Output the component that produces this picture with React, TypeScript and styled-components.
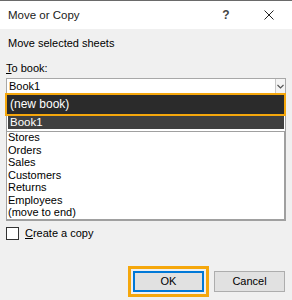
import React from 'react'
import styled, { createGlobalStyle } from 'styled-components'

const GlobalStyle = createGlobalStyle`
  html, body {
    margin: 0;
    padding: 0;
    background: #f0f0f0;
  }
  body {
    font-family: 'Liberation Sans', Arial, sans-serif;
    font-size: 11px;
    color: #000;
  }
`

const Window = styled.div`
  width: 292px;
  height: 300px;
  box-sizing: border-box;
  border-top: 1px solid #6a6a6a;
  background: #f0f0f0;
  overflow: hidden;
`

const TitleBar = styled.div`
  height: 28px;
  display: flex;
  align-items: center;
  background: #fff;
`

const Title = styled.div`
  flex: 1;
  padding-left: 8px;
  font-size: 11.5px;
  color: #1a1a1a;
`

const TitleButton = styled.div<{ $w: number }>`
  width: ${(p) => p.$w}px;
  height: 28px;
  display: flex;
  align-items: center;
  justify-content: center;
  font-size: 12px;
  font-weight: 700;
  color: #444;
`

const Body = styled.div`
  padding: 6px 6px 0;
`

const Label = styled.div<{ $gap?: number }>`
  line-height: 16px;
  margin-top: ${(p) => p.$gap ?? 0}px;
  padding-left: ${(p) => (p.$gap ? 0 : 2)}px;
`

const Key = styled.span`
  text-decoration: underline;
  text-underline-offset: 1px;
`

const ComboWrap = styled.div`
  position: relative;
  margin-top: 2px;
`

const Combo = styled.div`
  height: 16px;
  box-sizing: border-box;
  display: flex;
  border: 1px solid #a8a8a8;
  background: #fff;
`

const ComboValue = styled.div`
  flex: 1;
  padding-left: 2px;
  line-height: 14px;
`

const ComboArrow = styled.div`
  width: 9px;
  display: flex;
  align-items: center;
  justify-content: center;
  border-left: 1px solid #c8c8c8;
  background: #f4f4f4;
`

const Dropdown = styled.div`
  position: absolute;
  top: 15px;
  left: 0;
  right: 0;
  box-sizing: border-box;
  height: 39px;
  padding: 0 1px;
  border: 1px solid #a0a0a0;
  border-top: none;
  background: #fff;
  z-index: 2;
`

const Option = styled.div<{ $marked?: boolean }>`
  color: #fff;
  ${(p) =>
    p.$marked
      ? `
    height: 23px;
    margin: 0 -2px 0 -3px;
    box-sizing: border-box;
    border: 2px solid #f5a70c;
    background: #2b2b2b;
    padding-left: 3px;
    line-height: 19px;
    font-size: 12px;
  `
      : `
    height: 13px;
    background: #404040;
    padding-left: 2px;
    line-height: 13px;
    font-size: 11.5px;
  `}
`

const ListBox = styled.div`
  margin-top: 36px;
  border: 1px solid #a0a0a0;
  border-right-width: 2px;
  border-bottom-width: 2px;
  background: #fff;
`

const ListItem = styled.div`
  height: 12.5px;
  line-height: 12.5px;
  padding-left: 1px;
`

const CheckRow = styled.label`
  display: flex;
  align-items: center;
  gap: 6px;
  margin-top: 6px;
`

const Box = styled.span`
  width: 13px;
  height: 13px;
  box-sizing: border-box;
  border: 1px solid #333;
  background: #fff;
`

const ButtonRow = styled.div`
  display: flex;
  justify-content: flex-end;
  gap: 10px;
  margin-top: 31px;
  padding-right: 1px;
`

const Button = styled.button<{ $primary?: boolean }>`
  width: 71px;
  height: 21px;
  padding: 0;
  font-family: inherit;
  font-size: 11px;
  color: #000;
  background: #e1e1e1;
  border: ${(p) => (p.$primary ? '2px solid #0078d7' : '1px solid #adadad')};
  ${(p) => (p.$primary ? 'outline: 3px solid #f5a70c; outline-offset: 2px;' : '')}
`

const sheets = ['Stores', 'Orders', 'Sales', 'Customers', 'Returns', 'Employees', '(move to end)']

export default function App() {
  return (
    <Window>
      <GlobalStyle />
      <TitleBar>
        <Title>Move or Copy</Title>
        <TitleButton $w={40}>?</TitleButton>
        <TitleButton $w={46}>
          <svg width="10" height="10" viewBox="0 0 10 10">
            <path d="M0.5 0.5 L9.5 9.5 M9.5 0.5 L0.5 9.5" stroke="#222" strokeWidth="1" />
          </svg>
        </TitleButton>
      </TitleBar>
      <Body>
        <Label>Move selected sheets</Label>
        <Label $gap={9}>
          <Key>T</Key>o book:
        </Label>
        <ComboWrap>
          <Combo>
            <ComboValue>Book1</ComboValue>
            <ComboArrow>
              <svg width="7" height="5" viewBox="0 0 7 5">
                <path d="M0.5 1 L3.5 4 L6.5 1" fill="none" stroke="#555" strokeWidth="1.2" />
              </svg>
            </ComboArrow>
          </Combo>
          <Dropdown>
            <Option $marked>(new book)</Option>
            <Option>Book1</Option>
          </Dropdown>
          <ListBox>
            {sheets.map((s) => (
              <ListItem key={s}>{s}</ListItem>
            ))}
          </ListBox>
        </ComboWrap>
        <CheckRow>
          <Box />
          <span>
            <Key>C</Key>reate a copy
          </span>
        </CheckRow>
        <ButtonRow>
          <Button $primary>OK</Button>
          <Button>Cancel</Button>
        </ButtonRow>
      </Body>
    </Window>
  )
}
